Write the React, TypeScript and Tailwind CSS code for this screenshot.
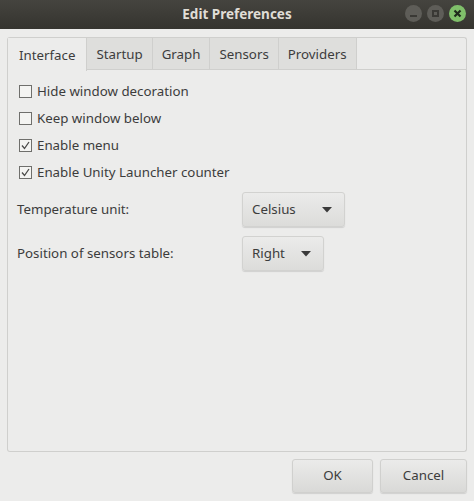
import { useState } from "react"

const font = { fontFamily: '"Noto Sans", "Open Sans", sans-serif' }

const tabs = ["Interface", "Startup", "Graph", "Sensors", "Providers"]

const options = [
  { label: "Hide window decoration", checked: false },
  { label: "Keep window below", checked: false },
  { label: "Enable menu", checked: true },
  { label: "Enable Unity Launcher counter", checked: true },
]

function CheckBox({ checked }: { checked: boolean }) {
  return (
    <span className="flex h-[13px] w-[13px] items-center justify-center border border-[#6f6f6c] bg-[#f4f4f2]">
      {checked && (
        <svg width="11" height="11" viewBox="0 0 11 11">
          <path d="M2 5.5 L4.5 8.5 L9 2" fill="none" stroke="#4a4a48" strokeWidth="1.3" />
        </svg>
      )}
    </span>
  )
}

function Combo({ value, width }: { value: string; width: string }) {
  return (
    <div
      className={`flex h-[35px] ${width} items-center justify-between rounded-[3px] border border-[#d2d2d0] bg-gradient-to-b from-[#ebebea] to-[#dcdcda] pl-[9px] pr-[12px] text-[13.3px] text-[#3c3c3c] shadow-[0_1px_1px_rgba(0,0,0,0.12)]`}
    >
      <span>{value}</span>
      <svg width="10" height="6" viewBox="0 0 10 6">
        <path d="M0 0 H10 L5 5.5 Z" fill="#3a3a3a" />
      </svg>
    </div>
  )
}

function DialogButton({ label, width }: { label: string; width: string }) {
  return (
    <div
      className={`flex h-[34px] ${width} items-center justify-center rounded-[3px] border border-[#d0d0ce] bg-gradient-to-b from-[#ebebea] to-[#d9d9d7] text-[13.3px] text-[#3c3c3c] shadow-[0_1px_1px_rgba(0,0,0,0.12)]`}
    >
      {label}
    </div>
  )
}

export default function App() {
  const [active] = useState(0)

  return (
    <div className="flex h-[501px] w-[474px] flex-col bg-[#ececeb]" style={font}>
      {/* title bar */}
      <div className="relative flex h-[29px] items-center justify-center bg-gradient-to-b from-[#45443f] to-[#35342f]">
        <span className="text-[13.5px] font-bold text-[#e0ddd6]">Edit Preferences</span>
        <div className="absolute right-[8px] top-[5px] flex items-center gap-[5px]">
          <span className="flex h-[17px] w-[17px] items-center justify-center rounded-full bg-[#5e5d58]">
            <span className="mt-[5px] h-[2px] w-[7px] bg-[#3a3935]" />
          </span>
          <span className="flex h-[17px] w-[17px] items-center justify-center rounded-full bg-[#5e5d58]">
            <span className="h-[7px] w-[7px] border-[2px] border-[#3a3935]" />
          </span>
          <span className="flex h-[17px] w-[17px] items-center justify-center rounded-full bg-[#7fbf6a]">
            <svg width="9" height="9" viewBox="0 0 9 9">
              <path d="M1.5 1.5 L7.5 7.5 M7.5 1.5 L1.5 7.5" stroke="#1f2b1c" strokeWidth="2.2" />
            </svg>
          </span>
        </div>
      </div>

      {/* notebook */}
      <div className="mx-[7px] mt-[8px] flex flex-col">
        <div className="flex h-[33px] rounded-t-[3px] border border-b-0 border-[#cfcfcd] bg-[#ebebea]">
          {tabs.map((t, i) => (
            <div
              key={t}
              className={
                i === active
                  ? "relative -mb-px flex items-center border-r border-[#cfcfcd] bg-[#ececeb] px-[11px] pt-[2px] text-[13.3px] text-[#3c3c3c]"
                  : "flex items-center border-r border-b border-[#cfcfcd] bg-[#dededc] px-[9px] pt-[2px] text-[13.3px] text-[#3c3c3c]"
              }
            >
              {t}
            </div>
          ))}
          <div className="flex-1 border-b border-[#cfcfcd]" />
        </div>

        <div className="flex h-[382px] flex-col rounded-b-[3px] border border-t-0 border-[#cfcfcd] bg-[#ececeb] px-[9px] pt-[12px] text-[13.3px] text-[#3c3c3c]">
          <div className="flex flex-col gap-[8px]">
            {options.map((o) => (
              <div key={o.label} className="flex h-[19px] items-center gap-[5px] pl-[2px]">
                <CheckBox checked={o.checked} />
                <span>{o.label}</span>
              </div>
            ))}
          </div>

          <div className="mt-[10px] flex flex-col gap-[9px]">
            <div className="flex items-center">
              <span className="w-[225px]">Temperature unit:</span>
              <Combo value="Celsius" width="w-[103px]" />
            </div>
            <div className="flex items-center">
              <span className="w-[225px]">Position of sensors table:</span>
              <Combo value="Right" width="w-[82px]" />
            </div>
          </div>
        </div>
      </div>

      {/* action area */}
      <div className="mr-[7px] mt-[7px] flex justify-end gap-[7px]">
        <DialogButton label="OK" width="w-[81px]" />
        <DialogButton label="Cancel" width="w-[87px]" />
      </div>
    </div>
  )
}
